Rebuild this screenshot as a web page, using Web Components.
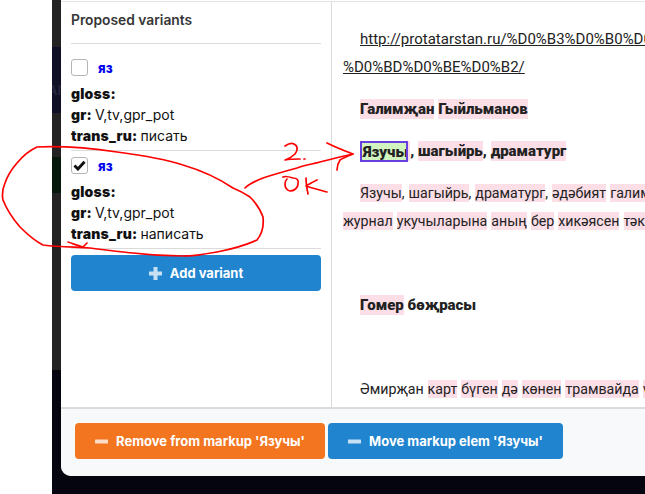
<!DOCTYPE html>
<html>
<head>
<meta charset="utf-8">
<style>
  html, body { margin: 0; padding: 0; background: #fff; }
  body { width: 645px; height: 494px; overflow: hidden; font-family: "Inter", "Liberation Sans", sans-serif; }
</style>
</head>
<body>
<markup-modal>
  <variant-panel slot="left">
    <variant-item word="яз" trans="писать"></variant-item>
    <variant-item word="яз" trans="написать" checked></variant-item>
  </variant-panel>
  <text-pane slot="right"></text-pane>
  <action-button slot="footer" color="#f37520" label="Remove from markup 'Язучы'" icon="minus" wide="250"></action-button>
  <action-button slot="footer" color="#2084cf" label="Move markup elem 'Язучы'" icon="minus" wide="235"></action-button>
</markup-modal>
<red-notes></red-notes>

<script>
// button with a small icon in front of the label
class ActionButton extends HTMLElement {
  connectedCallback() {
    const icon = this.getAttribute('icon');
    const bar = icon === 'plus'
      ? '<path d="M4.500 0h4v4.500H13v4H8.500V13h-4V8.500H0v-4h4.500z"/>'
      : '<rect x="0" y="4.500" width="13" height="4" rx=".5"/>';
    this.attachShadow({ mode: 'open' }).innerHTML = `
      <style>
        :host {
          display: flex; align-items: center; justify-content: center; gap: 8px;
          box-sizing: border-box; height: 36px; width: ${this.getAttribute('wide')}px;
          background: ${this.getAttribute('color')}; border-radius: 4px;
          color: #fff; font-size: 13px; font-weight: 700; white-space: nowrap;
        }
        svg { width: 13px; height: 13px; fill: rgba(255,255,255,.75); flex: none; }
      </style>
      <svg viewBox="0 0 13 13">${bar}</svg><span>${this.getAttribute('label')}</span>`;
  }
}
customElements.define('action-button', ActionButton);

class VariantItem extends HTMLElement {
  connectedCallback() {
    const tick = this.hasAttribute('checked')
      ? '<svg viewBox="0 0 14 12"><path d="M1.500 6l3.800 3.800 7.200-7.800" fill="none" stroke="#111" stroke-width="3.200"/></svg>'
      : '';
    this.attachShadow({ mode: 'open' }).innerHTML = `
      <style>
        :host { display: block; border-bottom: 1px solid #dbdbdb; padding: 6px 0 4px; font-size: 14px; color: #111; }
        .head { display: flex; align-items: center; gap: 10px; height: 17px; margin-bottom: 7px; }
        .box { width: 17px; height: 17px; box-sizing: border-box; border: 1px solid #b5b5b5; border-radius: 3px;
               display: flex; align-items: center; justify-content: center; background: #fff; }
        .box svg { width: 13px; height: 11px; }
        .word { color: #0000ee; font-weight: 800; font-size: 13px; }
        .row { height: 21px; line-height: 21px; white-space: nowrap; }
        b { font-weight: 900; letter-spacing: .2px; margin-right: -1px; }
      </style>
      <div class="head"><span class="box">${tick}</span><span class="word">${this.getAttribute('word')}</span></div>
      <div class="row"><b>gloss:</b></div>
      <div class="row"><b>gr:</b> V,tv,gpr_pot</div>
      <div class="row"><b>trans_ru:</b> ${this.getAttribute('trans')}</div>`;
  }
}
customElements.define('variant-item', VariantItem);

class VariantPanel extends HTMLElement {
  constructor() {
    super();
    this.attachShadow({ mode: 'open' }).innerHTML = `
      <style>
        :host { display: block; padding: 0 10px; width: 250px; }
        h3 { margin: 0; height: 41px; line-height: 37px; font-size: 13.800px; font-weight: 600; color: #363636;
             border-bottom: 1px solid #dbdbdb; }
        .list { padding-top: 9px; display: block; }
        action-button { margin-top: 6px; }
      </style>
      <h3>Proposed variants</h3>
      <div class="list"><slot></slot></div>
      <action-button color="#2084cf" label="Add variant" icon="plus" wide="250"></action-button>`;
  }
}
customElements.define('variant-panel', VariantPanel);

// one word with the pink markup behind it
function marks(text) {
  return text.split(' ').map(w => {
    const m = w.match(/^(.*?)([,.]?)$/);
    return `<mark>${m[1]}</mark>${m[2]}`;
  }).join(' ');
}

class TextPane extends HTMLElement {
  constructor() {
    super();
    this.attachShadow({ mode: 'open' }).innerHTML = `
      <style>
        :host { display: block; padding: 23px 0 0 11px; font-family: Roboto, "Liberation Sans", sans-serif; font-size: 15px;
                color: #222; line-height: 28px; white-space: nowrap; overflow: hidden; }
        p { margin: 0 0 14px; text-indent: 17px; }
        p.flush { text-indent: 0; }
        p.gap { margin-bottom: 56px; }
        p.plain { font-size: 14.200px; word-spacing: .5px; }
        a { color: #222; text-decoration: underline; }
        b { font-weight: 900; }
        mark { background: #fcdee7; color: inherit; padding: 1px 0; }
        .sel { background: #d2f5c0; outline: 2px solid #6a3fe0; outline-offset: -2px; padding: 1.500px 0 1.500px 3px; }
        .tail { padding-right: 2px; }
      </style>
      <p style="margin:0"><a>http://protatarstan.ru/%D0%B3%D0%B0%D0%BB%D0%B8%D0%BC</a></p>
      <p class="flush"><a>%D0%BD%D0%BE%D0%B2/</a></p>
      <p><b>${marks('Галимҗан Гыйльманов')}</b></p>
      <p><b><mark class="sel">Язучы</mark><mark class="tail"></mark>, ${marks('шагыйрь, драматург')}</b></p>
      <p class="plain" style="margin:0">${marks('Язучы, шагыйрь, драматург, әдәбият галиме')}</p>
      <p class="plain flush gap">${marks('журнал укучыларына аның бер хикәясен тәкъдим')}</p>
      <p class="gap"><b><mark>Гомер</mark> бөҗрасы</b></p>
      <p class="plain">Әмирҗан ${marks('карт бүген дә көнен трамвайда үткәрә')}</p>`;
  }
}
customElements.define('text-pane', TextPane);

class MarkupModal extends HTMLElement {
  constructor() {
    super();
    this.attachShadow({ mode: 'open' }).innerHTML = `
      <style>
        :host { display: grid; grid-template-columns: 52px 9px 1fr; grid-template-rows: 370px 124px; width: 645px; height: 494px; }
        .gutter { grid-row: 1 / 3; background: #fff; }
        .strip { display: flex; flex-direction: column; background: #222; }
        .strip i { display: block; }
        .strip .navy { height: 66px; background: #0f0f26; overflow: hidden; display: flex; justify-content: flex-end; align-items: center;
                       font: 700 13px "Inter", sans-serif; color: #25253c; padding-top: 20px; box-sizing: border-box; }
        .floor { grid-column: 2 / 3; grid-row: 2; background: #05050f; }
        .under { grid-column: 3; grid-row: 2; background: #05050f; }
        .modal { grid-column: 3; grid-row: 1 / 3; height: 476px; background: #fff; border-radius: 0 0 0 10px; overflow: hidden;
                 display: flex; flex-direction: column; box-sizing: border-box; padding-top: 1px; }
        .body { flex: none; box-sizing: border-box; display: flex; border-top: 1px solid #e3e3e3; height: 406px; }
        .left { width: 270px; flex: none; }
        .right { flex: 1; min-width: 0; border-left: 1px solid #dbdbdb; overflow: hidden; }
        footer { flex: 1; background: #f8f9fb; border-top: 2px solid #dbdbdb; display: flex; gap: 3px; padding: 14px; box-sizing: border-box; }
      </style>
      <div class="gutter"></div>
      <div class="strip">
        <i style="height:47px"></i>
        <i class="navy">Al</i>
        <i style="height:44px"></i>
        <i style="height:36px;background:#06180c"></i>
      </div>
      <div class="floor"></div>
      <div class="under"></div>
      <div class="modal">
        <div class="body">
          <div class="left"><slot name="left"></slot></div>
          <div class="right"><slot name="right"></slot></div>
        </div>
        <footer><slot name="footer"></slot></footer>
      </div>`;
  }
}
customElements.define('markup-modal', MarkupModal);

// the hand drawn red notes lie over the page
class RedNotes extends HTMLElement {
  constructor() {
    super();
    this.attachShadow({ mode: 'open' }).innerHTML = `
      <style>
        :host { position: absolute; left: 0; top: 0; width: 645px; height: 494px; pointer-events: none; }
        svg { width: 100%; height: 100%; fill: none; stroke: #f00; stroke-width: 1.700; stroke-linecap: round; stroke-linejoin: round; }
      </style>
      <svg viewBox="0 0 645 494">
        <path d="M250 197C244 193 238 190 233 188C218 178 200 170 183 165C162 158 140 155 117 152C90 148 60 146 37 147C28 151 22 157 17 163C11 170 7 177 5 183C2 190 2 195 3 200C7 210 13 219 20 227C28 235 35 241 43 245C60 247 75 247 90 248C105 250 120 252 133 253C150 255 168 256 183 256C195 256 206 254 217 252C232 249 246 245 257 240C262 234 264 226 263 217C260 209 256 203 250 197"/>
        <path d="M68 242C74 244 79 246 83 247L87 243"/>
        <path d="M245 188C250 183 256 181 263 178C275 174 286 171 297 168C305 165 313 164 320 162C332 159 343 156 353 154"/>
        <path d="M327 143C335 147 345 151 353 154C348 156 343 158 340 160C338 163 337 167 337 170"/>
        <path d="M285 146C288 144 292 143 294 144C298 146 298 150 295 154C292 157 288 159 285 160C290 159 295 159 300 159M304 159h1"/>
        <path d="M283 177C285 176 290 177 293 178C297 178 299 180 298 184C298 188 294 191 290 191C286 190 285 187 285 184C285 182 286 180 287 179"/>
        <path d="M306 178C306 183 307 189 308 194M317 180C313 182 309 184 306 186C312 188 320 190 327 192"/>
      </svg>`;
  }
}
customElements.define('red-notes', RedNotes);
</script>
</body>
</html>
